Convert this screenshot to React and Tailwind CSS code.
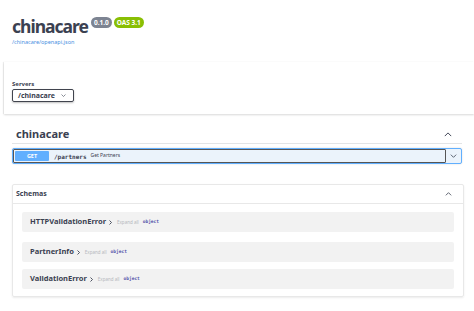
import React from 'react'

function ChevronUp({ className }) {
  return (
    <svg viewBox="0 0 10 6" className={className} fill="none" stroke="currentColor" strokeWidth="1.2">
      <path d="M1 5 L5 1 L9 5" />
    </svg>
  )
}

function ChevronDown({ className }) {
  return (
    <svg viewBox="0 0 10 6" className={className} fill="none" stroke="currentColor" strokeWidth="1.2">
      <path d="M1 1 L5 5 L9 1" />
    </svg>
  )
}

function ChevronRight({ className }) {
  return (
    <svg viewBox="0 0 6 10" className={className} fill="none" stroke="currentColor" strokeWidth="1.8">
      <path d="M1 1 L5 5 L1 9" />
    </svg>
  )
}

const schemas = [
  { name: 'HTTPValidationError', mt: 'mt-[8px]' },
  { name: 'PartnerInfo', mt: 'mt-[10px]' },
  { name: 'ValidationError', mt: 'mt-[7px]' },
]

export default function App() {
  return (
    <div className="w-[474px] h-[311px] bg-white overflow-hidden font-['Noto_Sans','Open_Sans',sans-serif] text-[#3b4151]">
      {/* Info */}
      <div className="pl-[12px] pt-[15px]">
        <div className="flex items-start">
          <h1 className="text-[17.5px] leading-[23px] font-bold tracking-[-1px]">chinacare</h1>
          <div className="flex gap-[2px] ml-[3px] mt-[2px]">
            <span className="h-[11px] px-[3px] rounded-full bg-[#7d8492] text-white text-[6.5px] leading-[11px] font-bold">0.1.0</span>
            <span className="h-[11px] px-[3px] rounded-full bg-[#89bf04] text-white text-[6.5px] leading-[11px] font-bold">OAS 3.1</span>
          </div>
        </div>
        <div className="mt-[1px] text-[5.5px] leading-[7px] text-[#4990e2]">/chinacare/openapi.json</div>
      </div>

      {/* Servers */}
      <div className="ml-[4px] mt-[16px] h-[52px] bg-white shadow-[0_1px_2px_0_rgba(0,0,0,0.15),-1px_0_1px_0_rgba(0,0,0,0.06)] pl-[8px] pt-[19px]">
        <div className="text-[6px] leading-[7px] font-bold">Servers</div>
        <div className="mt-[1px] w-[62px] h-[13px] border border-[#41444e] rounded-[2px] flex items-center justify-between pl-[5px] pr-[7px] shadow-[0_1px_2px_rgba(0,0,0,0.25)]">
          <span className="text-[7px] font-bold leading-none">/chinacare</span>
          <ChevronDown className="w-[5px] h-[3px] text-[#3b4151]" />
        </div>
      </div>

      {/* Tag */}
      <div className="px-[12px] mt-[11px]">
        <div className="flex items-center justify-between h-[19px] border-b border-[#e3e4e6] pl-[4px] pr-[10px]">
          <span className="text-[11px] font-bold leading-none -mt-[2px]">chinacare</span>
          <ChevronUp className="w-[8px] h-[5px] text-[#3b4151]" />
        </div>
        <div className="mt-[4px] flex h-[16px] bg-[#ebf3fb] border border-[#61affe] rounded-[2px] shadow-[0_0_2px_rgba(0,0,0,0.15)]">
          <div className="flex-1 flex items-center border border-[#555] rounded-[1px]">
            <span className="ml-[1px] w-[34px] h-[10px] bg-[#61affe] rounded-[1px] text-white text-[5.5px] font-bold flex items-center justify-center">GET</span>
            <span className="ml-[5px] font-['DejaVu_Sans_Mono',monospace] text-[6px] font-bold">/partners</span>
            <span className="ml-[4px] text-[5px]">Get Partners</span>
          </div>
          <div className="w-[15px] flex items-center justify-center">
            <ChevronDown className="w-[7px] h-[4px] text-[#3b4151]" />
          </div>
        </div>

        {/* Schemas */}
        <div className="mt-[20px] mr-[-2px] h-[113px] border border-[#e8e8e8] rounded-[2px] shadow-[0_1px_2px_rgba(0,0,0,0.08)]">
          <div className="h-[19px] border-b border-[#e8e8e8] flex items-center justify-between pl-[3px] pr-[11px]">
            <span className="text-[7px] font-bold">Schemas</span>
            <ChevronUp className="w-[7px] h-[4px] text-[#3b4151]" />
          </div>
          <div className="px-[9px]">
            {schemas.map(s => (
              <div key={s.name} className={`${s.mt} h-[20px] bg-[#f2f2f2] rounded-[2px] flex items-center pl-[8px]`}>
                <span className="text-[7.5px] font-bold">{s.name}</span>
                <ChevronRight className="ml-[3px] w-[3px] h-[5px] text-[#3b4151]" />
                <span className="ml-[5px] text-[4.5px] text-[#b5b8bd]">Expand all</span>
                <span className="ml-[4px] font-['DejaVu_Sans_Mono',monospace] text-[4.5px] font-bold text-[#55a]">object</span>
              </div>
            ))}
          </div>
        </div>
      </div>
    </div>
  )
}
